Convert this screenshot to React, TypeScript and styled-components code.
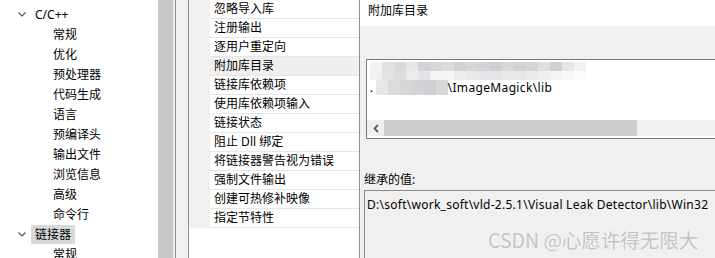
import React from "react";
import styled, { createGlobalStyle } from "styled-components";

const GlobalStyle = createGlobalStyle`
  html, body {
    margin: 0;
    padding: 0;
    background: #f0f0f0;
  }
  body {
    font-family: "Noto Sans", "Noto Sans CJK SC", sans-serif;
    font-size: 12px;
    color: #000;
  }
`;

const Screen = styled.div`
  position: relative;
  display: flex;
  width: 715px;
  height: 258px;
  overflow: hidden;
  background: #f0f0f0;
`;

const Tree = styled.ul`
  list-style: none;
  margin: 0;
  padding: 4px 0 0 0;
  width: 158px;
  flex: none;
  background: #fff;
`;

const TreeRow = styled.li<{ $level: number }>`
  display: flex;
  align-items: center;
  height: 20px;
  padding-left: ${(p) => (p.$level === 0 ? 18 : 49)}px;
  white-space: nowrap;
`;

const TreeLabel = styled.span<{ $selected?: boolean }>`
  padding: 0 4px;
  line-height: 19px;
  background: ${(p) => (p.$selected ? "#d9d9d9" : "transparent")};
`;

const Chevron = styled.svg`
  width: 8px;
  height: 5px;
  margin-right: 5px;
  flex: none;
`;

const ScrollStrip = styled.div`
  width: 15px;
  flex: none;
  background: #c8c8c8;
`;

const Pane = styled.div<{ $w: number }>`
  width: ${(p) => p.$w}px;
  flex: none;
  background: #f0f0f0;
`;

const Divider = styled.div`
  width: 1px;
  flex: none;
  background: #8f8f8f;
`;

const PropList = styled.div`
  width: 170px;
  flex: none;
  display: flex;
  flex-direction: column;
  background: #fff;
`;

const PropRow = styled.div`
  display: flex;
  height: 19px;
  flex: none;
`;

const Gutter = styled.div`
  width: 21px;
  flex: none;
  background: #f0f0f0;
`;

const PropCell = styled.div<{ $active?: boolean }>`
  flex: 1;
  padding-left: 4px;
  line-height: 18px;
  border-bottom: 1px solid #e6e6e6;
  background: ${(p) => (p.$active ? "#efefef" : "#fff")};
  white-space: nowrap;
  overflow: hidden;
`;

const Dialog = styled.div`
  width: 400px;
  flex: none;
  display: flex;
  flex-direction: column;
  border-left: 1px solid #8f8f8f;
  background: #f0f0f0;
`;

const DialogHeader = styled.div`
  height: 26px;
  flex: none;
  padding-left: 8px;
  line-height: 21px;
  background: #fff;
`;

const DialogBody = styled.div`
  display: flex;
  flex-direction: column;
  padding: 33px 0 0 4px;
`;

const EditBox = styled.div`
  height: 80px;
  box-sizing: border-box;
  margin-left: 2px;
  display: flex;
  flex-direction: column;
  border: 1px solid #7a7a7a;
  background: #fff;
  letter-spacing: 0.35px;
`;

const EditContent = styled.div`
  flex: 1;
  padding: 2px 0 0 3px;
`;

const EditLine = styled.div`
  display: flex;
  align-items: center;
  height: 15px;
  line-height: 15px;
  white-space: nowrap;
`;

const Mosaic = styled.div`
  display: flex;
  flex-direction: column;
  height: 18px;
`;

const TileRow = styled.div<{ $indent?: number }>`
  display: flex;
  padding-left: ${(p) => p.$indent || 0}px;
`;

const Tile = styled.span<{ $c: string; $h?: number }>`
  width: 12px;
  height: ${(p) => p.$h || 9}px;
  flex: none;
  background: ${(p) => p.$c};
`;

const HScroll = styled.div`
  display: flex;
  height: 16px;
  margin-bottom: 2px;
  background: #f0f0f0;
`;

const ArrowButton = styled.div`
  width: 17px;
  flex: none;
  display: flex;
  align-items: center;
  justify-content: center;
`;

const Thumb = styled.div`
  width: 253px;
  flex: none;
  background: #cdcdcd;
`;

const FieldLabel = styled.div`
  margin-top: 32px;
  line-height: 18px;
`;

const InheritedBox = styled.div`
  margin-top: 1px;
  height: 100px;
  padding: 5px 2px;
  border: 1px solid #8a8a8a;
  background: #f0f0f0;
  line-height: 18px;
  letter-spacing: 0.26px;
  white-space: nowrap;
`;

const Watermark = styled.div`
  position: absolute;
  left: 488px;
  top: 228px;
  font-family: "Noto Sans CJK SC", sans-serif;
  font-size: 19.5px;
  line-height: 24px;
  color: #c4c4c4;
  text-shadow: 0 0 1px #fff;
  white-space: nowrap;
`;

const treeItems: { label: string; level: number; selected?: boolean }[] = [
  { label: "C/C++", level: 0 },
  { label: "常规", level: 1 },
  { label: "优化", level: 1 },
  { label: "预处理器", level: 1 },
  { label: "代码生成", level: 1 },
  { label: "语言", level: 1 },
  { label: "预编译头", level: 1 },
  { label: "输出文件", level: 1 },
  { label: "浏览信息", level: 1 },
  { label: "高级", level: 1 },
  { label: "命令行", level: 1 },
  { label: "链接器", level: 0, selected: true },
  { label: "常规", level: 1 },
];

const props = [
  "忽略导入库",
  "注册输出",
  "逐用户重定向",
  "附加库目录",
  "链接库依赖项",
  "使用库依赖项输入",
  "链接状态",
  "阻止 Dll 绑定",
  "将链接器警告视为错误",
  "强制文件输出",
  "创建可热修补映像",
  "指定节特性",
];

// blurred bits of the path, as seen in the screenshot
const mosaicA = ["#f2f2f2", "#e2e0e2", "#d9d9dd", "#e6e6e8", "#cfd2d8", "#d6d6d8", "#dcdcdc", "#d6d0d0", "#dad6d6", "#d2d4d8", "#cccfd6", "#d8d8d8", "#d2d2d2", "#d6d4d6", "#e0e0e0", "#cfcfd4", "#e6e6e6", "#f2f2f2"];
const mosaicB = ["#f0f0f0", "#e4e2e4", "#dedde0", "#eceaea", "#e4e4e8", "#f4f4f4", "#f6f6f6", "#ececec", "#e8e8e8", "#e6e6e6", "#e4e4e4", "#e8e8ea", "#e6e6e6", "#eaeaea", "#f0f0f0", "#f4f4f4", "#f8f8f8", "#fcfcfc"];
const mosaicC = ["#e8e6e8", "#dcdadc", "#d6d6d8", "#d2d4d8", "#cfd0d4", "#d8d8d8"];

function TreeChevron() {
  return (
    <Chevron viewBox="0 0 8 5">
      <path d="M0.5 0.5 L4 4 L7.5 0.5" fill="none" stroke="#555" strokeWidth="1.2" />
    </Chevron>
  );
}

export default function App() {
  return (
    <>
      <GlobalStyle />
      <Screen>
        <Tree>
          {treeItems.map((it, i) => (
            <TreeRow key={i} $level={it.level}>
              {it.level === 0 && <TreeChevron />}
              <TreeLabel $selected={it.selected}>{it.label}</TreeLabel>
            </TreeRow>
          ))}
        </Tree>
        <ScrollStrip />
        <Pane $w={2} />
        <Divider />
        <Pane $w={12} />
        <Divider />
        <PropList>
          {props.map((p) => (
            <PropRow key={p}>
              <Gutter />
              <PropCell $active={p === "附加库目录"}>{p}</PropCell>
            </PropRow>
          ))}
        </PropList>
        <Dialog>
          <DialogHeader>附加库目录</DialogHeader>
          <DialogBody>
            <EditBox>
              <EditContent>
                <Mosaic>
                  <TileRow>
                    {mosaicA.map((c, i) => (
                      <Tile key={i} $c={c} />
                    ))}
                  </TileRow>
                  <TileRow>
                    {mosaicB.map((c, i) => (
                      <Tile key={i} $c={c} />
                    ))}
                  </TileRow>
                </Mosaic>
                <EditLine>
                  .
                  <TileRow $indent={2}>
                    {mosaicC.map((c, i) => (
                      <Tile key={i} $c={c} $h={15} />
                    ))}
                  </TileRow>
                  {"\\ImageMagick\\lib"}
                </EditLine>
              </EditContent>
              <HScroll>
                <ArrowButton>
                  <svg width="6" height="9" viewBox="0 0 6 9">
                    <path d="M5 1 L1.5 4.5 L5 8" fill="none" stroke="#606060" strokeWidth="1.8" />
                  </svg>
                </ArrowButton>
                <Thumb />
              </HScroll>
            </EditBox>
            <FieldLabel>继承的值:</FieldLabel>
            <InheritedBox>{"D:\\soft\\work_soft\\vld-2.5.1\\Visual Leak Detector\\lib\\Win32"}</InheritedBox>
          </DialogBody>
        </Dialog>
        <Watermark>CSDN @心愿许得无限大</Watermark>
      </Screen>
    </>
  );
}
